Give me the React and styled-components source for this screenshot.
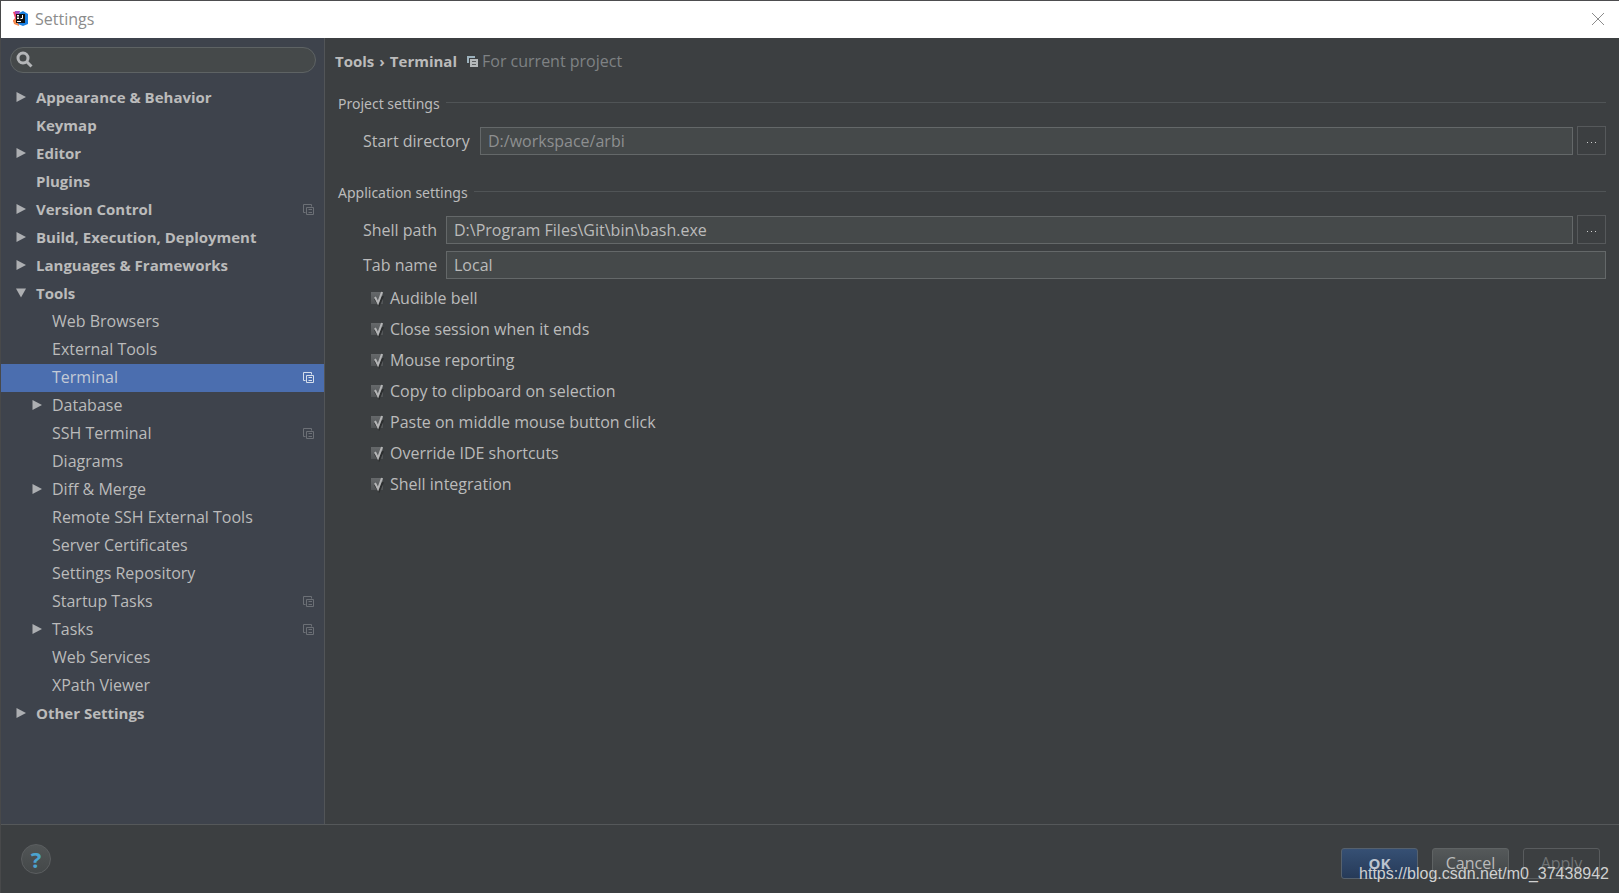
import React, { useState } from 'react';
import styled, { createGlobalStyle } from 'styled-components';

const GlobalStyle = createGlobalStyle`
  * {
    box-sizing: border-box;
  }

  body {
    margin: 0;
    background: #3c3f41;
    color: #bbbbbb;
    font-family: 'Open Sans', 'Noto Sans', sans-serif;
    font-size: 16px;
    line-height: 20px;
  }

  button,
  input {
    font: inherit;
    color: inherit;
  }
`;

const Window = styled.div`
  position: relative;
  display: flex;
  flex-direction: column;
  min-height: 100vh;
  border-top: 1px solid #4d4d4f;
  border-left: 1px solid #48494a;
`;

const TitleBar = styled.header`
  display: flex;
  align-items: center;
  gap: 6px;
  height: 37px;
  padding: 0 14px 2px 11px;
  background: #ffffff;
  color: #8c8c8c;
`;

const Title = styled.h1`
  flex: 1;
  margin: 0;
  font-size: 16px;
  font-weight: 400;
`;

const CloseButton = styled.button`
  display: flex;
  padding: 0;
  border: none;
  background: none;
  color: #8c8c8c;
`;

const Body = styled.div`
  display: flex;
  flex: 1;
`;

const Sidebar = styled.aside`
  flex: 0 0 324px;
  border-right: 1px solid #525558;
  background: #3e434c;
`;

const SearchBox = styled.label`
  display: flex;
  align-items: center;
  height: 26px;
  margin: 9px 8px 11px 9px;
  padding: 0 10px 0 5px;
  border: 1px solid #5e6364;
  border-radius: 13px;
  background: #45494a;
`;

const SearchInput = styled.input`
  flex: 1;
  min-width: 0;
  border: none;
  outline: none;
  background: transparent;
`;

const Tree = styled.ul`
  margin: 0;
  padding: 0;
  list-style: none;
`;

const TreeRow = styled.button`
  display: flex;
  align-items: center;
  width: 100%;
  height: 28px;
  padding: 0 9px 2px ${({ $nested }) => ($nested ? '31px' : '15px')};
  border: none;
  background: ${({ $selected }) => ($selected ? '#4b6eaf' : 'transparent')};
  color: ${({ $selected }) => ($selected ? '#c3cad6' : '#bbbbbb')};
  font-size: ${({ $nested }) => ($nested ? '16px' : '15px')};
  font-weight: ${({ $nested }) => ($nested ? 400 : 700)};
  text-align: left;
`;

const ArrowSlot = styled.span`
  display: flex;
  flex: 0 0 20px;
`;

const RowLabel = styled.span`
  flex: 1;
`;

const Main = styled.main`
  flex: 1;
  padding: 13px 13px 24px 10px;
`;

const Breadcrumb = styled.div`
  display: flex;
  align-items: center;
  gap: 5px;
  font-size: 15px;
  font-weight: 700;
`;

const ProjectHint = styled.span`
  display: flex;
  align-items: center;
  gap: 4px;
  margin-left: 5px;
  color: #7f8284;
  font-size: 16px;
  font-weight: 400;
`;

const Section = styled.section`
  margin-top: 23px;
  padding-left: 3px;

  & + & {
    margin-top: 28px;
  }
`;

const SectionTitle = styled.h2`
  display: flex;
  align-items: center;
  gap: 6px;
  margin: 0 0 12px;
  font-family: 'Noto Sans', 'Open Sans', sans-serif;
  font-size: 14px;
  font-weight: 400;

  &::after {
    content: '';
    flex: 1;
    height: 1px;
    margin-bottom: 4px;
    background: #505456;
  }
`;

const FieldRow = styled.div`
  display: grid;
  grid-template-columns: ${({ $labelWidth }) => $labelWidth} 1fr auto;
  align-items: center;
  min-height: 29px;
  margin-bottom: 6px;
  padding-left: 25px;
`;

const TextField = styled.input`
  min-width: 0;
  height: 28px;
  padding: 0 7px;
  border: 1px solid #646869;
  outline: none;
  background: #45494a;

  &::placeholder {
    color: #8d8f90;
    opacity: 1;
  }
`;

const BrowseButton = styled.button`
  display: flex;
  align-items: center;
  justify-content: center;
  width: 29px;
  height: 29px;
  margin-left: 4px;
  padding: 4px 0 0;
  border: 1px solid #56595b;
  background: #3c3f41;
`;

const CheckList = styled.div`
  display: flex;
  flex-direction: column;
  align-items: flex-start;
  gap: 11px;
  padding: 3px 0 0 33px;
`;

const CheckLabel = styled.label`
  display: grid;
  grid-template-columns: 13px auto;
  align-items: center;
  column-gap: 6px;
`;

const CheckInput = styled.input`
  grid-area: 1 / 1;
  width: 12px;
  height: 12px;
  margin: 0;
  appearance: none;
  background: linear-gradient(#66696b, #505355);
`;

const CheckMark = styled.svg`
  grid-area: 1 / 1;
  overflow: visible;
  pointer-events: none;
`;

const Footer = styled.footer`
  display: flex;
  align-items: center;
  gap: 14px;
  height: 69px;
  padding: 8px 19px 0 20px;
  border-top: 1px solid #55585a;
`;

const HelpButton = styled.button`
  width: 30px;
  height: 30px;
  margin: 0 auto 8px 0;
  padding: 0;
  border: 1px solid #5b5e60;
  border-radius: 50%;
  background: linear-gradient(#515556, #444849);
  color: #4ba3cf;
  font-size: 22px;
  font-weight: 700;
  line-height: 28px;
`;

const buttonLooks = {
  primary: ['linear-gradient(#365074, #263a58)', '#56616d', '#bbc3cf', 700],
  normal: ['linear-gradient(#55595a, #414547)', '#5f6364', '#bbbbbb', 400],
  disabled: ['#3c3f41', '#595c5e', '#6f7274', 400],
};

const DialogButton = styled.button`
  width: 77px;
  height: 31px;
  padding: 0;
  border: 1px solid ${({ $look }) => buttonLooks[$look][1]};
  border-radius: 3px;
  background: ${({ $look }) => buttonLooks[$look][0]};
  color: ${({ $look }) => buttonLooks[$look][2]};
  font-size: ${({ $look }) => ($look === 'primary' ? '15px' : '16px')};
  font-weight: ${({ $look }) => buttonLooks[$look][3]};
`;

const Watermark = styled.div`
  position: absolute;
  right: 10px;
  bottom: 9px;
  color: #cfd0d0;
  font-family: 'Liberation Sans', Arial, sans-serif;
  font-size: 16px;
  pointer-events: none;
`;

const treeItems = [
  { label: 'Appearance & Behavior', arrow: 'right' },
  { label: 'Keymap' },
  { label: 'Editor', arrow: 'right' },
  { label: 'Plugins' },
  { label: 'Version Control', arrow: 'right', project: true },
  { label: 'Build, Execution, Deployment', arrow: 'right' },
  { label: 'Languages & Frameworks', arrow: 'right' },
  { label: 'Tools', arrow: 'down' },
  { label: 'Web Browsers', nested: true },
  { label: 'External Tools', nested: true },
  { label: 'Terminal', nested: true, project: true },
  { label: 'Database', nested: true, arrow: 'right' },
  { label: 'SSH Terminal', nested: true, project: true },
  { label: 'Diagrams', nested: true },
  { label: 'Diff & Merge', nested: true, arrow: 'right' },
  { label: 'Remote SSH External Tools', nested: true },
  { label: 'Server Certificates', nested: true },
  { label: 'Settings Repository', nested: true },
  { label: 'Startup Tasks', nested: true, project: true },
  { label: 'Tasks', nested: true, arrow: 'right', project: true },
  { label: 'Web Services', nested: true },
  { label: 'XPath Viewer', nested: true },
  { label: 'Other Settings', arrow: 'right' },
];

const terminalOptions = [
  'Audible bell',
  'Close session when it ends',
  'Mouse reporting',
  'Copy to clipboard on selection',
  'Paste on middle mouse button click',
  'Override IDE shortcuts',
  'Shell integration',
];

const AppLogo = () => (
  <svg width="17" height="17" viewBox="0 0 17 17" aria-hidden="true">
    <path d="M1 2 L6 1 L9 5 L7 15 L3 14 L1 11 L3 8 Z" fill="#f0436b" />
    <path d="M1 10 L6 8 L7 16 L2 14 Z" fill="#f58a4b" />
    <path d="M7 3 L11 1 L16 4 L16 14 L11 16 L6 14 Z" fill="#1a7fe0" />
    <path d="M3 1 L8 1 L7 4 L3 4 Z" fill="#a44fc0" />
    <rect x="4" y="4" width="9" height="9" fill="#111111" />
    <path d="M5 5.500h2M6 5.500v3M5 8.500h2M10.500 5v3.500h-2M5 11.500h4" stroke="#ffffff" fill="none" />
  </svg>
);

const CloseIcon = () => (
  <svg width="14" height="14" viewBox="0 0 14 14" stroke="currentColor" aria-hidden="true">
    <path d="M1 1 L13 13 M13 1 L1 13" />
  </svg>
);

const SearchIcon = () => (
  <svg width="18" height="18" viewBox="0 0 18 18" fill="none" stroke="#b4b6b8" aria-hidden="true">
    <circle cx="7" cy="7" r="5" strokeWidth="3" />
    <path d="M10.500 10.500 L15.500 15.500" strokeWidth="3" />
  </svg>
);

const Arrow = ({ direction }) => (
  <svg width="10" height="10" viewBox="0 0 10 10" fill="#adafb2" aria-hidden="true">
    <path d={direction === 'down' ? 'M0 0.500 H10 L5 9.500 Z' : 'M0.500 0 L10 5 L0.500 10 Z'} />
  </svg>
);

const ProjectIcon = ({ color }) => (
  <svg width="12" height="12" viewBox="0 -1 12 12" fill="none" stroke={color} aria-hidden="true">
    <path d="M2.500 8.500 H0.500 V0.500 H8.500 V2.500" />
    <path d="M3.500 3.500 H10.500 V10.500 H3.500 Z M5.500 5.500 H9 M5.500 8.500 H9" />
  </svg>
);

const SolidProjectIcon = () => (
  <svg width="11" height="11" viewBox="0 0 11 11" aria-hidden="true">
    <path d="M0 0 H8 V2 H2 V7 H0 Z" fill="#9db2bd" />
    <path d="M3 3 H11 V11 H3 Z" fill="#b4b8ba" />
    <path d="M5 5.500 H9 M5 8.500 H9" stroke="#5a5d5f" />
  </svg>
);

const Ellipsis = () => (
  <svg width="9" height="1" viewBox="0 0 9 1" fill="#d0d0d0" aria-hidden="true">
    <path d="M0 0h1v1h-1zM4 0h1v1h-1zM8 0h1v1h-1z" />
  </svg>
);

const Option = ({ label }) => {
  const [checked, setChecked] = useState(true);

  return (
    <CheckLabel>
      <CheckInput type="checkbox" checked={checked} onChange={(e) => setChecked(e.target.checked)} />
      {checked && (
        <CheckMark width="13" height="13" viewBox="0 0 13 13" fill="none" aria-hidden="true">
          <path d="M4 7 L8 13 L12 4" stroke="#2b2d2e" strokeWidth="2" />
          <path d="M4 5 L7 11 L11 0" stroke="#b4b5b6" strokeWidth="2" />
        </CheckMark>
      )}
      <span>{label}</span>
    </CheckLabel>
  );
};

const App = () => {
  const [selected, setSelected] = useState('Terminal');
  const [directory, setDirectory] = useState('');
  const [shellPath, setShellPath] = useState('D:\\Program Files\\Git\\bin\\bash.exe');
  const [tabName, setTabName] = useState('Local');

  return (
    <Window>
      <GlobalStyle />
      <TitleBar>
        <AppLogo />
        <Title>Settings</Title>
        <CloseButton aria-label="Close">
          <CloseIcon />
        </CloseButton>
      </TitleBar>

      <Body>
        <Sidebar>
          <SearchBox>
            <SearchIcon />
            <SearchInput type="text" aria-label="Search settings" />
          </SearchBox>
          <Tree>
            {treeItems.map(({ label, arrow, nested, project }) => (
              <li key={label}>
                <TreeRow
                  $nested={nested}
                  $selected={label === selected}
                  onClick={() => setSelected(label)}
                >
                  <ArrowSlot>{arrow && <Arrow direction={arrow} />}</ArrowSlot>
                  <RowLabel>{label}</RowLabel>
                  {project && <ProjectIcon color={label === selected ? '#d5deec' : '#6c7076'} />}
                </TreeRow>
              </li>
            ))}
          </Tree>
        </Sidebar>

        <Main>
          <Breadcrumb>
            <span>Tools</span>
            <span>›</span>
            <span>Terminal</span>
            <ProjectHint>
              <SolidProjectIcon />
              For current project
            </ProjectHint>
          </Breadcrumb>

          <Section>
            <SectionTitle>Project settings</SectionTitle>
            <FieldRow $labelWidth="117px">
              <label htmlFor="directory">Start directory</label>
              <TextField
                id="directory"
                placeholder="D:/workspace/arbi"
                value={directory}
                onChange={(e) => setDirectory(e.target.value)}
              />
              <BrowseButton aria-label="Browse start directory">
                <Ellipsis />
              </BrowseButton>
            </FieldRow>
          </Section>

          <Section>
            <SectionTitle>Application settings</SectionTitle>
            <FieldRow $labelWidth="83px">
              <label htmlFor="shell">Shell path</label>
              <TextField id="shell" value={shellPath} onChange={(e) => setShellPath(e.target.value)} />
              <BrowseButton aria-label="Browse shell path">
                <Ellipsis />
              </BrowseButton>
            </FieldRow>
            <FieldRow $labelWidth="83px">
              <label htmlFor="tab">Tab name</label>
              <TextField id="tab" value={tabName} onChange={(e) => setTabName(e.target.value)} />
            </FieldRow>
            <CheckList>
              {terminalOptions.map((label) => (
                <Option key={label} label={label} />
              ))}
            </CheckList>
          </Section>
        </Main>
      </Body>

      <Footer>
        <HelpButton aria-label="Help">?</HelpButton>
        <DialogButton $look="primary">OK</DialogButton>
        <DialogButton $look="normal">Cancel</DialogButton>
        <DialogButton $look="disabled" disabled>
          Apply
        </DialogButton>
      </Footer>
      <Watermark>https://blog.csdn.net/m0_37438942</Watermark>
    </Window>
  );
};

export default App;
